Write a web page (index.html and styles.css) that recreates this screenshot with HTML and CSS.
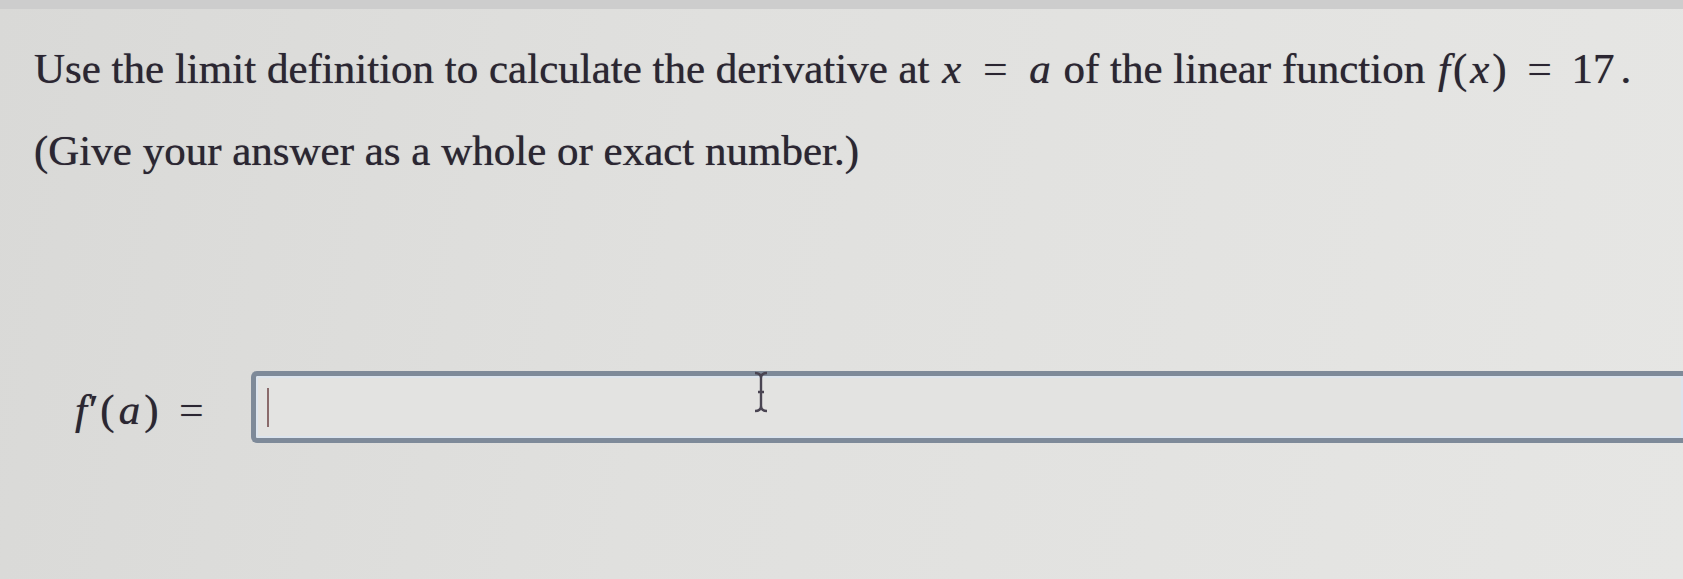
FILE: index.html
```html
<!DOCTYPE html>
<html lang="en">
<head>
    <meta charset="UTF-8">
    <meta name="viewport" content="width=device-width, initial-scale=1.0">
    <title>Derivative question</title>
    <link rel="stylesheet" href="styles.css">
</head>
<body>
    <div class="top-strip"></div>
    <main class="question">
        <p class="prompt">Use the limit definition to calculate the derivative at <span class="mi">x</span> <span class="mo">=</span> <span class="mi">a</span> of the linear function <span class="mi">f</span><span class="paren">(</span><span class="mi">x</span><span class="paren">)</span> <span class="mo">=</span> 17<span class="punct">.</span></p>
        <p class="hint">(Give your answer as a whole or exact number.)</p>
        <div class="answer-row">
            <label class="answer-label" for="answer"><span class="mi">f</span>&#8242;<span class="paren">(</span><span class="mi">a</span><span class="paren">)</span> <span class="mo">=</span></label>
            <div class="answer-box">
                <span class="caret"></span>
                <input type="text" id="answer">
            </div>
            <svg class="ibeam" width="16" height="42" viewBox="0 0 16 42">
                <path d="M2 2 Q8 2 8 7 Q8 2 14 2 M8 7 L8 35 M2 40 Q8 40 8 35 Q8 40 14 40 M5 21 L11 21" fill="none" stroke="#4a4552" stroke-width="2.4"/>
            </svg>
        </div>
    </main>
</body>
</html>
```

FILE: styles.css
```css
html, body {
    margin: 0;
    padding: 0;
    height: 100%;
    overflow: hidden;
}
body {
    background: linear-gradient(100deg, #d9d9d7 0%, #e0e0de 40%, #e6e6e4 100%);
    font-family: "Liberation Serif", "Times New Roman", serif;
    color: #2b2632;
    text-shadow: 0 0 0.7px rgba(43, 38, 50, 0.8);
}
.top-strip {
    height: 9px;
    background-color: #cdcdcd;
}
.question {
    padding: 36px 0 0 34px;
}
.prompt, .hint {
    margin: 0;
    font-size: 43px;
    line-height: 48px;
    white-space: nowrap;
}
.hint {
    margin-top: 34px;
}
.mi {
    font-style: italic;
    padding: 0 2px;
}
.paren {
    padding: 0 1px;
}
.mo {
    padding: 0 9px;
}
.punct {
    margin-left: 6px;
}
.answer-row {
    position: relative;
    display: flex;
    align-items: flex-start;
    margin-top: 196px;
    margin-left: 39px;
}
.answer-label {
    flex: none;
    width: 178px;
    margin-top: 15px;
    font-size: 43px;
    line-height: 48px;
    white-space: nowrap;
}
.answer-label .paren {
    padding: 0 2px;
}
.answer-label .mo {
    padding: 0 8px;
}
.answer-box {
    position: relative;
    flex: 1;
    height: 62px;
    border: 5px solid #7e8a99;
    border-right: none;
    border-radius: 6px 0 0 6px;
    box-shadow: inset 0 0 0 2px #dce4ed;
    background-color: #e3e3e1;
}
.answer-box input {
    width: 100%;
    height: 100%;
    border: none;
    background: transparent;
    outline: none;
    padding: 0;
}
.caret {
    position: absolute;
    left: 11px;
    top: 12px;
    width: 2px;
    height: 39px;
    background-color: #8a6b6b;
}
.ibeam {
    position: absolute;
    left: 680px;
    top: 0;
}
```
